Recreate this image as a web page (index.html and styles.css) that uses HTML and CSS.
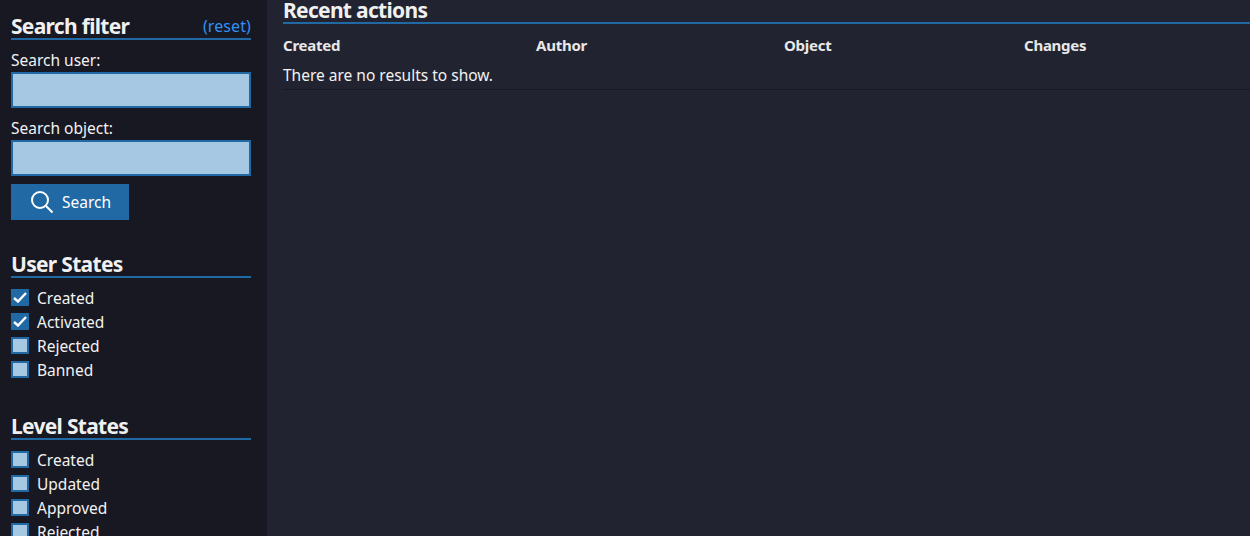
FILE: index.html
```html
<!DOCTYPE html>
<html lang="en">
<head>
<meta charset="utf-8">
<title>Recent actions</title>
<link rel="stylesheet" href="styles.css">
</head>
<body>
<div class="layout">
  <aside class="sidebar">
    <form class="filter">
      <div class="title-row">
        <h2 class="title">Search filter</h2>
        <a class="reset" href="#">(reset)</a>
      </div>
      <label class="field-label" for="u">Search user:</label>
      <input class="field" id="u" type="text">
      <label class="field-label" for="o">Search object:</label>
      <input class="field" id="o" type="text">
      <button class="search-btn" type="button">
        <svg class="search-icon" width="24" height="24" viewBox="0 0 24 24" fill="none" stroke="#fff"><circle cx="10" cy="10" r="8" stroke-width="2"/><path d="M16 16 22.5 22.5" stroke-width="2"/></svg>
        <span>Search</span>
      </button>
    </form>
    <section class="group">
      <h2 class="title">User States</h2>
      <ul class="checks">
        <li class="check"><span class="box on"><svg width="14" height="11" viewBox="0 0 14 11" fill="none" stroke="#fff" stroke-width="2.4"><path d="M1 6l4 3.5L13 1"/></svg></span>Created</li>
        <li class="check"><span class="box on"><svg width="14" height="11" viewBox="0 0 14 11" fill="none" stroke="#fff" stroke-width="2.4"><path d="M1 6l4 3.5L13 1"/></svg></span>Activated</li>
        <li class="check"><span class="box"></span>Rejected</li>
        <li class="check"><span class="box"></span>Banned</li>
      </ul>
    </section>
    <section class="group">
      <h2 class="title">Level States</h2>
      <ul class="checks">
        <li class="check"><span class="box"></span>Created</li>
        <li class="check"><span class="box"></span>Updated</li>
        <li class="check"><span class="box"></span>Approved</li>
        <li class="check"><span class="box"></span>Rejected</li>
      </ul>
    </section>
  </aside>
  <main class="main">
    <h2 class="title main-title">Recent actions</h2>
    <div class="table-head">
      <div>Created</div><div>Author</div><div>Object</div><div>Changes</div>
    </div>
    <div class="empty">There are no results to show.</div>
  </main>
</div>
</body>
</html>
```
FILE: styles.css
```css
* { box-sizing: border-box; }
html, body { margin: 0; height: 100%; overflow: hidden; }
body {
  background: #212330;
  color: #f2f2f2;
  font-family: "Noto Sans", "Open Sans", sans-serif;
  font-size: 15.5px;
}
.layout { display: flex; height: 536px; overflow: hidden; }
.sidebar {
  width: 267px;
  flex: none;
  background: #171821;
  padding: 12px 16px 0 11px;
  overflow: hidden;
}
.main { flex: 1; min-width: 0; padding: 0 0 0 16px; }
.title {
  margin: 0;
  height: 28px;
  font-size: 21px;
  line-height: 28px;
  font-weight: 700;
  letter-spacing: -0.7px;
  color: #f0f0f0;
  border-bottom: 2px solid #2069a5;
}
.title-row { display: flex; justify-content: space-between; align-items: flex-start; border-bottom: 2px solid #2069a5; height: 28px; }
.title-row .title { border-bottom: 0; }
.reset { color: #3090f5; text-decoration: none; font-size: 16px; line-height: 28px; letter-spacing: 0.1px; }
.field-label { display: block; margin-top: 10px; height: 22px; line-height: 20px; }
.field {
  display: block;
  width: 100%;
  height: 36px;
  border: 2px solid #2069a5;
  background: #a6c8e3;
  border-radius: 0;
  outline: 0;
  padding: 0;
}
.search-btn {
  display: flex;
  align-items: center;
  gap: 8px;
  width: 118px;
  height: 36px;
  margin-top: 8px;
  padding: 0 0 0 19px;
  background: #2069a5;
  color: #fff;
  border: 0;
  font: inherit;
}
.search-icon { flex: none; }
.group { margin-top: 30px; }
.checks { list-style: none; margin: 8px 0 0; padding: 0; }
.check { display: flex; align-items: center; height: 24px; gap: 8px; }
.box {
  display: flex;
  align-items: center;
  justify-content: center;
  align-self: flex-start;
  width: 18px;
  height: 17px;
  margin-top: 3px;
  flex: none;
  border: 2px solid #2069a5;
  background: #a6c8e3;
}
.box.on { background: #2069a5; }
.main-title { line-height: 20px; height: 24px; }
.table-head {
  display: grid;
  grid-template-columns: 253px 248px 240px 1fr;
  margin-top: 9px;
  height: 24px;
  line-height: 25px;
  font-weight: 700;
  font-size: 15px;
  letter-spacing: -0.25px;
  color: #e8e8e8;
}
.empty {
  height: 33px;
  padding-top: 7px;
  line-height: 22px;
  border-bottom: 1px solid #171821;
}
```
